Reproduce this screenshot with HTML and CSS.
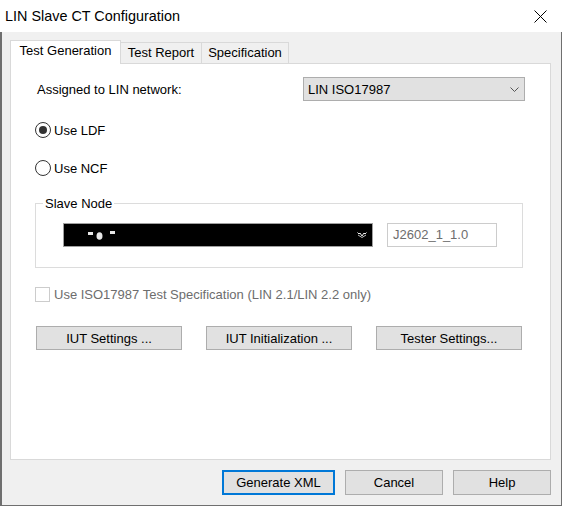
FILE: index.html
```html
<!DOCTYPE html>
<html lang="en">

<head>
    <meta charset="UTF-8">
    <title>LIN Slave CT Configuration</title>
    <link rel="stylesheet" href="styles.css">
</head>

<body>
    <div class="window">

        <!-- Title Bar -->
        <div class="titlebar">
            <span class="title">LIN Slave CT Configuration</span>
            <span class="close">
                <svg width="13" height="13" viewBox="0 0 13 13">
                    <path d="M0.5 0.5 L12.5 12.5 M12.5 0.5 L0.5 12.5" stroke="#000" stroke-width="1" fill="none" />
                </svg>
            </span>
        </div>

        <div class="dialog">
            <!-- Tabs -->
            <div class="tabs">
                <div class="tab tab-gen active">Test Generation</div>
                <div class="tab tab-report">Test Report</div>
                <div class="tab tab-spec">Specification</div>
            </div>

            <div class="panel">
                <div class="network-row">
                    <span class="network-label">Assigned to LIN network:</span>
                    <div class="combo network-combo">
                        <span>LIN ISO17987</span>
                        <svg class="chevron" width="9" height="5" viewBox="0 0 9 5">
                            <polyline points="0.5,0.5 4.5,4.5 8.5,0.5" stroke="#555" stroke-width="1" fill="none" />
                        </svg>
                    </div>
                </div>

                <label class="radio radio-ldf checked"><span class="radio-circle"></span>Use LDF</label>
                <label class="radio radio-ncf"><span class="radio-circle"></span>Use NCF</label>

                <fieldset class="group">
                    <legend>Slave Node</legend>
                    <div class="group-row">
                        <div class="combo node-combo">
                            <svg width="29" height="9" viewBox="0 0 29 9">
                                <rect x="0" y="1" width="5" height="3" fill="#e6e6e6" />
                                <ellipse cx="11.5" cy="5" rx="3" ry="3.8" fill="#e6e6e6" />
                                <rect x="22" y="0" width="5" height="3" fill="#e6e6e6" />
                            </svg>
                            <svg class="chevron" width="10" height="6" viewBox="0 0 10 6">
                                <polyline points="0.5,0.5 2,2 3,1 5,4 7,1 8,2 9.5,0.5" stroke="#eee" stroke-width="1" fill="none" />
                                <polyline points="1,3 5,5.5 9,3" stroke="#bbb" stroke-width="1" fill="none" />
                            </svg>
                        </div>
                        <div class="edit">J2602_1_1.0</div>
                    </div>
                </fieldset>

                <label class="check disabled"><span class="check-box"></span>Use ISO17987 Test Specification (LIN 2.1/LIN 2.2 only)</label>

                <div class="panel-buttons">
                    <button class="btn wide">IUT Settings ...</button>
                    <button class="btn wide">IUT Initialization ...</button>
                    <button class="btn wide">Tester Settings...</button>
                </div>
            </div>

            <!-- Dialog Buttons -->
            <div class="dialog-buttons">
                <button class="btn default btn-generate">Generate XML</button>
                <button class="btn btn-small">Cancel</button>
                <button class="btn btn-small">Help</button>
            </div>
        </div>
    </div>
</body>

</html>
```

FILE: styles.css
```css
/* Basic Reset */
* {
    margin: 0;
    padding: 0;
    box-sizing: border-box;
}

body {
    font-family: 'Liberation Sans', Arial, sans-serif;
    font-size: 13px;
    color: #000;
    background-color: #f0f0f0;
}

.window {
    width: 562px;
    height: 506px;
    display: flex;
    flex-direction: column;
}

/* Title Bar */
.titlebar {
    height: 32px;
    background-color: #fff;
    display: flex;
    align-items: center;
    padding-left: 5px;
}

.title {
    font-size: 14.4px;
}

.close {
    margin-left: auto;
    width: 44px;
    height: 32px;
    display: flex;
    align-items: center;
    justify-content: center;
}

/* Dialog Body */
.dialog {
    flex: 1;
    display: flex;
    flex-direction: column;
    background-color: #f0f0f0;
    border-left: 2px solid #6f6f6f;
    border-right: 1px solid #6f6f6f;
    border-bottom: 1px solid #6f6f6f;
    padding: 8px 10px 10px 8px;
}

/* Tabs */
.tabs {
    display: flex;
    align-items: flex-end;
    height: 23px;
}

.tab {
    height: 21px;
    line-height: 20px;
    text-align: center;
    border: 1px solid #d9d9d9;
    border-bottom: none;
    background-color: #f0f0f0;
    margin-left: -1px;
}

.tab.active {
    position: relative;
    z-index: 1;
    height: 24px;
    margin-left: 0;
    margin-bottom: -1px;
    background-color: #fff;
}

.tab-gen {
    width: 111px;
}

.tab-report {
    width: 82px;
}

.tab-spec {
    width: 88px;
}

/* Tab Panel */
.panel {
    flex: 1;
    background-color: #fff;
    border: 1px solid #d9d9d9;
    padding: 0 25px 0 24px;
}

.network-row {
    display: flex;
    align-items: center;
    height: 24px;
    margin-top: 13px;
}

.network-label {
    padding-left: 2px;
}

.combo {
    display: flex;
    align-items: center;
    height: 24px;
}

.network-combo {
    margin-left: auto;
    width: 222px;
    background-color: #e1e1e1;
    border: 1px solid #adadad;
    padding-left: 4px;
}

.chevron {
    margin-left: auto;
    margin-right: 5px;
}

/* Radios */
.radio {
    display: flex;
    align-items: center;
    height: 16px;
}

.radio-ldf {
    margin-top: 21px;
}

.radio-ncf {
    margin-top: 22px;
}

.radio-circle {
    width: 16px;
    height: 16px;
    border: 1px solid #333;
    border-radius: 50%;
    margin-right: 3px;
    display: flex;
    align-items: center;
    justify-content: center;
}

.radio.checked .radio-circle::after {
    content: '';
    width: 8px;
    height: 8px;
    border-radius: 50%;
    background-color: #333;
}

/* Slave Node Group */
.group {
    margin: 20px 2px 0 0;
    border: 1px solid #dcdcdc;
    padding: 12px 0 20px 0;
}

.group legend {
    margin-left: 7px;
    padding: 0 2px;
    line-height: 15px;
}

.group-row {
    display: flex;
    align-items: center;
    padding-left: 27px;
}

.node-combo {
    width: 310px;
    background-color: #000;
    border: 1px solid #a0a0a0;
    padding-left: 24px;
}

.edit {
    margin-left: 14px;
    width: 110px;
    height: 24px;
    border: 1px solid #ccc;
    padding-left: 5px;
    line-height: 21px;
    color: #6d6d6d;
}

/* Checkbox */
.check {
    display: flex;
    align-items: center;
    height: 15px;
    margin-top: 19px;
}

.check-box {
    width: 15px;
    height: 15px;
    border: 1px solid #ccc;
    background-color: #fff;
    margin-right: 4px;
}

.check.disabled {
    color: #6d6d6d;
}

/* Buttons */
.btn {
    font-family: inherit;
    font-size: 13px;
    color: #000;
    background-color: #e1e1e1;
    border: 1px solid #adadad;
}

.panel-buttons {
    display: flex;
    gap: 24px;
    margin-top: 24px;
    padding-left: 1px;
}

.btn.wide {
    width: 146px;
    height: 24px;
}

.dialog-buttons {
    display: flex;
    justify-content: flex-end;
    gap: 10px;
    margin-top: 10px;
    height: 25px;
}

.btn.default {
    border: 2px solid #0078d7;
}

.btn-generate {
    width: 113px;
}

.btn-small {
    width: 98px;
}
```
